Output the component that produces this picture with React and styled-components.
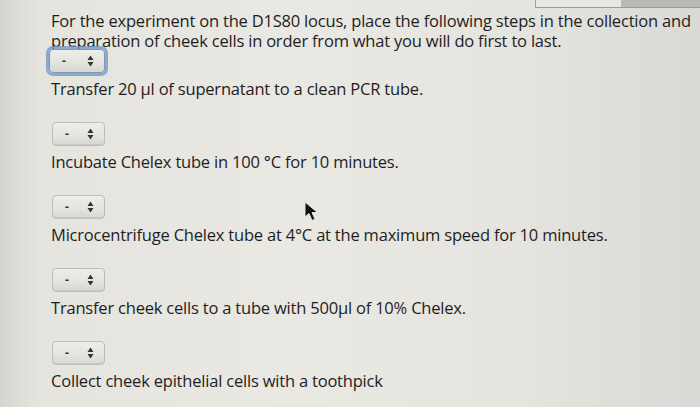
import React from "react";
import styled, { createGlobalStyle } from "styled-components";

const Global = createGlobalStyle`
  html, body { margin: 0; padding: 0; }
  body {
    width: 700px;
    height: 407px;
    overflow: hidden;
    font-family: "Open Sans", "Noto Sans", sans-serif;
    color: #1e1e1e;
    background: linear-gradient(90deg, #d3d3cf 0px, #dcdcd7 14px, #e5e4df 40px, #e9e8e3 300px, #e5e4df 520px, #d9d9d5 700px);
  }
`;

const Page = styled.div`
  position: relative;
  width: 700px;
  height: 407px;
  box-sizing: border-box;
  padding: 11px 0 0 51px;
`;

const TopWidget = styled.div`
  position: absolute;
  top: -4px;
  right: -2px;
  width: 165px;
  height: 10px;
  border: 1px solid #9c9c98;
  background: #e9e8e3;
  display: flex;
  justify-content: flex-end;
`;

const TopButton = styled.div`
  width: 80px;
  height: 100%;
  background: #b9b9b5;
`;

const Question = styled.p`
  margin: 0;
  font-size: 16.5px;
  font-weight: 500;
  line-height: 20px;
  letter-spacing: -0.2px;
  white-space: nowrap;
`;

const Steps = styled.div`
  display: flex;
  flex-direction: column;
  margin-top: -2px;
`;

const Step = styled.div`
  display: flex;
  flex-direction: column;
  align-items: flex-start;
  gap: 6px;
  margin-bottom: 23px;
`;

const Select = styled.div`
  box-sizing: border-box;
  width: ${p => (p.$focused ? "56px" : "53px")};
  height: 24px;
  margin-left: ${p => (p.$focused ? "-2px" : "1px")};
  border-radius: 4px;
  border: 1px solid ${p => (p.$focused ? "#7d9ab5" : "#bdbdb9")};
  background: linear-gradient(180deg, #ededea 0%, #e3e3df 60%, #d6d6d2 100%);
  box-shadow: ${p =>
    p.$focused
      ? "0 0 0 3px rgba(110, 150, 195, 0.75)"
      : "inset 0 -1px 0 rgba(0,0,0,0.06)"};
  display: flex;
  align-items: center;
  justify-content: space-between;
  padding: 0 10px 0 12px;
`;

const Dash = styled.span`
  font-size: 12px;
  line-height: 1;
  color: #333;
  font-weight: 700;
`;

const StepText = styled.div`
  font-size: 16.5px;
  font-weight: 500;
  line-height: 20px;
  letter-spacing: -0.2px;
  white-space: nowrap;
`;

const Cursor = styled.svg`
  position: absolute;
  left: 303px;
  top: 201px;
`;

const Arrows = () => (
  <svg width="7" height="12" viewBox="0 0 7 12">
    <path d="M3.5 0.5 L6.5 5 L0.5 5 Z" fill="#333" />
    <path d="M3.5 11.5 L6.5 7 L0.5 7 Z" fill="#333" />
  </svg>
);

const steps = [
  "Transfer 20 µl of supernatant to a clean PCR tube.",
  "Incubate Chelex tube in 100 °C for 10 minutes.",
  "Microcentrifuge Chelex tube at 4°C at the maximum speed for 10 minutes.",
  "Transfer cheek cells to a tube with 500µl of 10% Chelex.",
  "Collect cheek epithelial cells with a toothpick",
];

export default function App() {
  return (
    <>
      <Global />
      <Page>
        <TopWidget>
          <TopButton />
        </TopWidget>
        <Question>
          For the experiment on the D1S80 locus, place the following steps in the collection and
          <br />
          preparation of cheek cells in order from what you will do first to last.
        </Question>
        <Steps>
          {steps.map((s, i) => (
            <Step key={i}>
              <Select $focused={i === 0}>
                <Dash>-</Dash>
                <Arrows />
              </Select>
              <StepText>{s}</StepText>
            </Step>
          ))}
        </Steps>
        <Cursor width="20" height="22" viewBox="0 0 20 22">
          <path
            d="M2 1 L2 16 L6 12.5 L9 19.5 L12 18 L9 11.5 L14.5 11.5 Z"
            fill="#111"
            stroke="#e8e8e4"
            strokeWidth="1"
            strokeLinejoin="round"
          />
        </Cursor>
      </Page>
    </>
  );
}
